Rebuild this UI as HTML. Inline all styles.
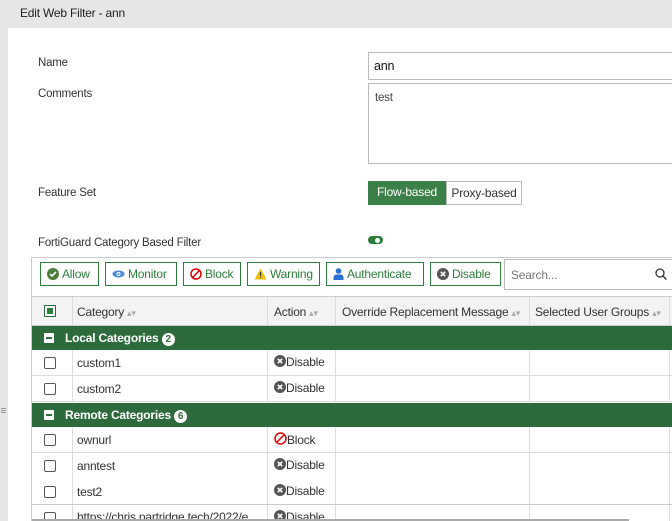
<!DOCTYPE html>
<html style="width:672px;height:521px;overflow:hidden"><head><style>
*{box-sizing:border-box;margin:0;padding:0}
body{width:672px;height:521px;overflow:hidden;background:#fff;font-family:"Liberation Sans",sans-serif;font-size:12px;color:#333;position:relative;letter-spacing:-0.2px}
.a{position:absolute}
.lbl{position:absolute;left:38px;font-size:11.5px;color:#333}
.btn{position:absolute;top:262px;height:24px;border:1px solid #2e7d3c;color:#2e7d3c;font-size:12px;line-height:22px;padding-left:6px;white-space:nowrap}
.btn svg{vertical-align:-2px;margin-right:3px}
.row{position:absolute;left:32px;width:640px;border-bottom:1px solid #ddd}
.c{position:absolute;top:0;height:100%;border-left:1px solid #ddd}
.t{position:absolute;font-size:12px;color:#333}
.cb{position:absolute;left:12px;width:12px;height:12px;border:1px solid #555;border-radius:2px;background:#fff}
.grp{position:absolute;left:32px;width:640px;background:#2e6b3c;color:#fff;font-weight:bold;font-size:12px}
.sort{color:#aaa;font-size:9px;margin-left:3px}
</style></head><body>
<div class="a" style="left:0;top:0;width:672px;height:28px;background:#e6e6e6"></div>
<div class="a" style="left:20px;top:6px;font-size:12px;color:#222">Edit Web Filter - ann</div>
<div class="a" style="left:0;top:28px;width:8px;height:493px;background:#e6e6e6"></div>
<div class="a" style="left:1px;top:408px;width:5px;height:1px;background:#999;box-shadow:0 2px 0 #999,0 4px 0 #999"></div>

<div class="lbl" style="top:57px">Name</div>
<div class="lbl" style="top:88px">Comments</div>
<div class="lbl" style="top:187px">Feature Set</div>
<div class="lbl" style="top:237px">FortiGuard Category Based Filter</div>

<div class="a" style="left:368px;top:52px;width:310px;height:28px;border:1px solid #bbb;padding:6px 5px;font-size:12.5px;color:#111">ann</div>
<div class="a" style="left:368px;top:83px;width:310px;height:81px;border:1px solid #bbb;padding:8px 6px;font-size:11.5px;color:#444">test</div>

<div class="a" style="left:368px;top:181px;width:78px;height:24px;background:#3a8048;color:#fff;font-size:12px;line-height:23px;text-align:center">Flow-based</div>
<div class="a" style="left:446px;top:181px;width:76px;height:24px;border:1px solid #bbb;font-size:12px;line-height:22px;text-align:center;color:#333">Proxy-based</div>

<div class="a" style="left:368px;top:236px;width:15px;height:8px;border-radius:4px;background:#2e7d3c"></div>
<div class="a" style="left:375px;top:238px;width:5px;height:5px;border-radius:3px;background:#fff"></div>

<div class="a" style="left:31px;top:257px;width:645px;height:270px;border:1px solid #ccc"></div>

<div class="btn" style="left:40px;width:59px"><svg width="12" height="12"><circle cx="6" cy="6" r="6" fill="#4a7d3a"/><path d="M3 6l2 2 4-4" stroke="#fff" stroke-width="1.6" fill="none"/></svg>Allow</div>
<div class="btn" style="left:105px;width:72px"><svg width="13" height="12"><ellipse cx="6.5" cy="6" rx="6" ry="3.5" fill="#4a8ad8"/><circle cx="6.5" cy="6" r="2" fill="#fff"/><circle cx="6.5" cy="6" r="1" fill="#4a8ad8"/></svg>Monitor</div>
<div class="btn" style="left:183px;width:58px"><svg width="12" height="12"><circle cx="6" cy="6" r="5" stroke="#d00" stroke-width="1.5" fill="none"/><path d="M2.5 9.5l7-7" stroke="#d00" stroke-width="1.5"/></svg>Block</div>
<div class="btn" style="left:247px;width:73px"><svg width="13" height="12"><path d="M6.5 0.5L12.5 11.5H0.5Z" fill="#f0c000"/><path d="M6.5 4v4M6.5 9.3v1" stroke="#333" stroke-width="1.2"/></svg>Warning</div>
<div class="btn" style="left:326px;width:98px"><svg width="11" height="12"><circle cx="5.5" cy="3" r="2.8" fill="#2a6fd6"/><path d="M0.5 12v-2.5a3 3 0 013-3h4a3 3 0 013 3V12Z" fill="#2a6fd6"/></svg>Authenticate</div>
<div class="btn" style="left:430px;width:71px"><svg width="12" height="12"><circle cx="6" cy="6" r="6" fill="#555"/><path d="M3.8 3.8l4.4 4.4M8.2 3.8l-4.4 4.4" stroke="#fff" stroke-width="1.6"/></svg>Disable</div>
<div class="a" style="left:504px;top:259px;width:172px;height:31px;border:1px solid #bbb;padding:8px 6px;font-size:12px;color:#777">Search...</div>
<svg class="a" style="left:655px;top:268px" width="12" height="12"><circle cx="5" cy="5" r="4" stroke="#333" stroke-width="1.3" fill="none"/><path d="M8 8l3.5 3.5" stroke="#333" stroke-width="1.5"/></svg>

<div class="row" style="top:296px;height:30px;background:#f3f3f3;border-top:1px solid #ccc;border-bottom:1px solid #ccc">
<div class="a" style="left:12px;top:8px;width:12px;height:12px;border:1px solid #2e6b3c;background:#fff"></div>
<div class="a" style="left:15px;top:11px;width:6px;height:6px;background:#2e7d3c"></div>
<div class="c" style="left:40px"></div><div class="t" style="left:45px;top:8px">Category<span class="sort">&#x25B4;&#x25BE;</span></div>
<div class="c" style="left:235px"></div><div class="t" style="left:242px;top:8px">Action<span class="sort">&#x25B4;&#x25BE;</span></div>
<div class="c" style="left:303px"></div><div class="t" style="left:310px;top:8px">Override Replacement Message<span class="sort">&#x25B4;&#x25BE;</span></div>
<div class="c" style="left:497px"></div><div class="t" style="left:503px;top:8px">Selected User Groups<span class="sort">&#x25B4;&#x25BE;</span></div>
<div class="c" style="left:637px"></div>
</div>

<div class="grp" style="top:326px;height:24px">
<div class="a" style="left:12px;top:7px;width:10px;height:10px;background:#fff;border-radius:1px"></div><div class="a" style="left:14px;top:11px;width:6px;height:2px;background:#2e6b3c"></div>
<div class="a" style="left:33px;top:5px">Local Categories <span style="display:inline-block;width:13px;height:13px;border-radius:7px;background:#fff;color:#2e6b3c;font-size:10px;text-align:center;line-height:13px">2</span></div>
</div>

<div class="row" style="top:350px;height:26px"><div class="cb" style="top:7px"></div><div class="c" style="left:40px"></div><div class="t" style="left:45px;top:6px">custom1</div><div class="c" style="left:235px"></div><div class="t" style="left:242px;top:5px"><svg width="12" height="12" style="vertical-align:-1px"><circle cx="6" cy="6" r="6" fill="#555"/><path d="M3.8 3.8l4.4 4.4M8.2 3.8l-4.4 4.4" stroke="#fff" stroke-width="1.6"/></svg>Disable</div><div class="c" style="left:303px"></div><div class="c" style="left:497px"></div><div class="c" style="left:637px"></div></div>
<div class="row" style="top:376px;height:26px"><div class="cb" style="top:7px"></div><div class="c" style="left:40px"></div><div class="t" style="left:45px;top:6px">custom2</div><div class="c" style="left:235px"></div><div class="t" style="left:242px;top:5px"><svg width="12" height="12" style="vertical-align:-1px"><circle cx="6" cy="6" r="6" fill="#555"/><path d="M3.8 3.8l4.4 4.4M8.2 3.8l-4.4 4.4" stroke="#fff" stroke-width="1.6"/></svg>Disable</div><div class="c" style="left:303px"></div><div class="c" style="left:497px"></div><div class="c" style="left:637px"></div></div>

<div class="grp" style="top:403px;height:24px">
<div class="a" style="left:12px;top:7px;width:10px;height:10px;background:#fff;border-radius:1px"></div><div class="a" style="left:14px;top:11px;width:6px;height:2px;background:#2e6b3c"></div>
<div class="a" style="left:33px;top:5px">Remote Categories <span style="display:inline-block;width:13px;height:13px;border-radius:7px;background:#fff;color:#2e6b3c;font-size:10px;text-align:center;line-height:13px">6</span></div>
</div>

<div class="row" style="top:427px;height:26px"><div class="cb" style="top:7px"></div><div class="c" style="left:40px"></div><div class="t" style="left:45px;top:6px">ownurl</div><div class="c" style="left:235px"></div><div class="t" style="left:242px;top:5px"><svg width="13" height="13" style="vertical-align:-1px"><circle cx="6.5" cy="6.5" r="5.5" stroke="#e00" stroke-width="1.5" fill="none"/><path d="M2.7 10.3l7.6-7.6" stroke="#e00" stroke-width="1.5"/></svg>Block</div><div class="c" style="left:303px"></div><div class="c" style="left:497px"></div><div class="c" style="left:637px"></div></div>
<div class="row" style="top:453px;height:26px;border-bottom:none"><div class="cb" style="top:7px"></div><div class="c" style="left:40px"></div><div class="t" style="left:45px;top:6px">anntest</div><div class="c" style="left:235px"></div><div class="t" style="left:242px;top:5px"><svg width="12" height="12" style="vertical-align:-1px"><circle cx="6" cy="6" r="6" fill="#555"/><path d="M3.8 3.8l4.4 4.4M8.2 3.8l-4.4 4.4" stroke="#fff" stroke-width="1.6"/></svg>Disable</div><div class="c" style="left:303px"></div><div class="c" style="left:497px"></div><div class="c" style="left:637px"></div></div>
<div class="row" style="top:479px;height:26px;border-bottom:1px solid #ccc"><div class="cb" style="top:7px"></div><div class="c" style="left:40px"></div><div class="t" style="left:45px;top:6px">test2</div><div class="c" style="left:235px"></div><div class="t" style="left:242px;top:5px"><svg width="12" height="12" style="vertical-align:-1px"><circle cx="6" cy="6" r="6" fill="#555"/><path d="M3.8 3.8l4.4 4.4M8.2 3.8l-4.4 4.4" stroke="#fff" stroke-width="1.6"/></svg>Disable</div><div class="c" style="left:303px"></div><div class="c" style="left:497px"></div><div class="c" style="left:637px"></div></div>
<div class="a" style="left:32px;top:505px;width:640px;height:16px;overflow:hidden">
<div class="cb" style="top:7px"></div><div class="c" style="left:40px"></div><div class="t" style="left:45px;top:5px">https://chris.partridge.tech/2022/e</div><div class="c" style="left:235px"></div><div class="t" style="left:242px;top:5px"><svg width="12" height="12" style="vertical-align:-1px"><circle cx="6" cy="6" r="6" fill="#555"/><path d="M3.8 3.8l4.4 4.4M8.2 3.8l-4.4 4.4" stroke="#fff" stroke-width="1.6"/></svg>Disable</div><div class="c" style="left:303px"></div><div class="c" style="left:497px"></div><div class="c" style="left:637px"></div></div>
<div class="a" style="left:32px;top:519px;width:597px;height:2px;background:#aaa"></div>
</body></html>
